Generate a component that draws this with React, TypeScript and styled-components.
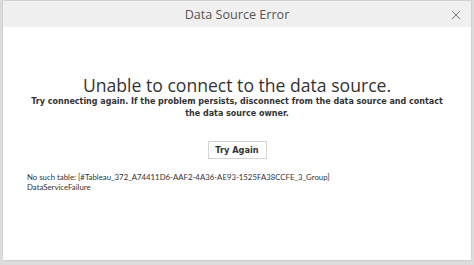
import React from 'react';
import styled, { createGlobalStyle } from 'styled-components';

const GlobalStyle = createGlobalStyle`
  html, body { margin: 0; padding: 0; background: #e4e4e4; }
  body { width: 474px; height: 265px; overflow: hidden; }
`;

const Backdrop = styled.div`
  width: 474px;
  height: 265px;
  background: #dcdcdc;
  padding: 1px 3px 0 3px;
  box-sizing: border-box;
`;

const Dialog = styled.div`
  height: 259px;
  background: #ffffff;
  display: flex;
  flex-direction: column;
  box-shadow: 0 0 2px rgba(0, 0, 0, 0.15);
`;

const TitleBar = styled.div`
  height: 26px;
  background: #f0f0f0;
  display: flex;
  align-items: center;
  justify-content: center;
  position: relative;
  font-family: 'Open Sans', 'Liberation Sans', sans-serif;
  font-size: 12.6px;
  color: #555;
`;

const Close = styled.svg`
  position: absolute;
  right: 10px;
  top: 9px;
`;

const Body = styled.div`
  flex: 1;
  display: flex;
  flex-direction: column;
  align-items: center;
  padding-top: 47px;
`;

const Heading = styled.h1`
  margin: 0;
  font-family: 'Open Sans', 'Liberation Sans', sans-serif;
  font-weight: 400;
  font-size: 17.6px;
  line-height: 22px;
  color: #333;
`;

const Hint = styled.p`
  margin: 0;
  font-family: 'DejaVu Sans', Verdana, sans-serif;
  font-weight: 700;
  font-size: 8px;
  line-height: 12px;
  text-align: center;
  color: #333;
`;

const Button = styled.button`
  margin-top: 21px;
  width: 59px;
  height: 18px;
  padding: 0;
  background: #fff;
  border: 1px solid #d4d4d4;
  font-family: 'DejaVu Sans', Verdana, sans-serif;
  font-weight: 700;
  font-size: 8.2px;
  color: #333;
`;

const Details = styled.div`
  align-self: stretch;
  margin-top: 13px;
  padding-left: 24px;
  font-family: 'Lato', 'Liberation Sans', sans-serif;
  font-size: 7.8px;
  line-height: 10px;
  color: #333;
`;

export default function App() {
  return (
    <>
      <GlobalStyle />
      <Backdrop>
        <Dialog>
          <TitleBar>
            Data Source Error
            <Close width="10" height="10" viewBox="0 0 10 10">
              <path d="M1 1 L9 9 M9 1 L1 9" stroke="#777" strokeWidth="1" fill="none" />
            </Close>
          </TitleBar>
          <Body>
            <Heading>Unable to connect to the data source.</Heading>
            <Hint>
              Try connecting again. If the problem persists, disconnect from the data source and contact
              <br />
              the data source owner.
            </Hint>
            <Button>Try Again</Button>
            <Details>
              No such table: [#Tableau_372_A74411D6-AAF2-4A36-AE93-1525FA38CCFE_3_Group]
              <br />
              DataServiceFailure
            </Details>
          </Body>
        </Dialog>
      </Backdrop>
    </>
  );
}
